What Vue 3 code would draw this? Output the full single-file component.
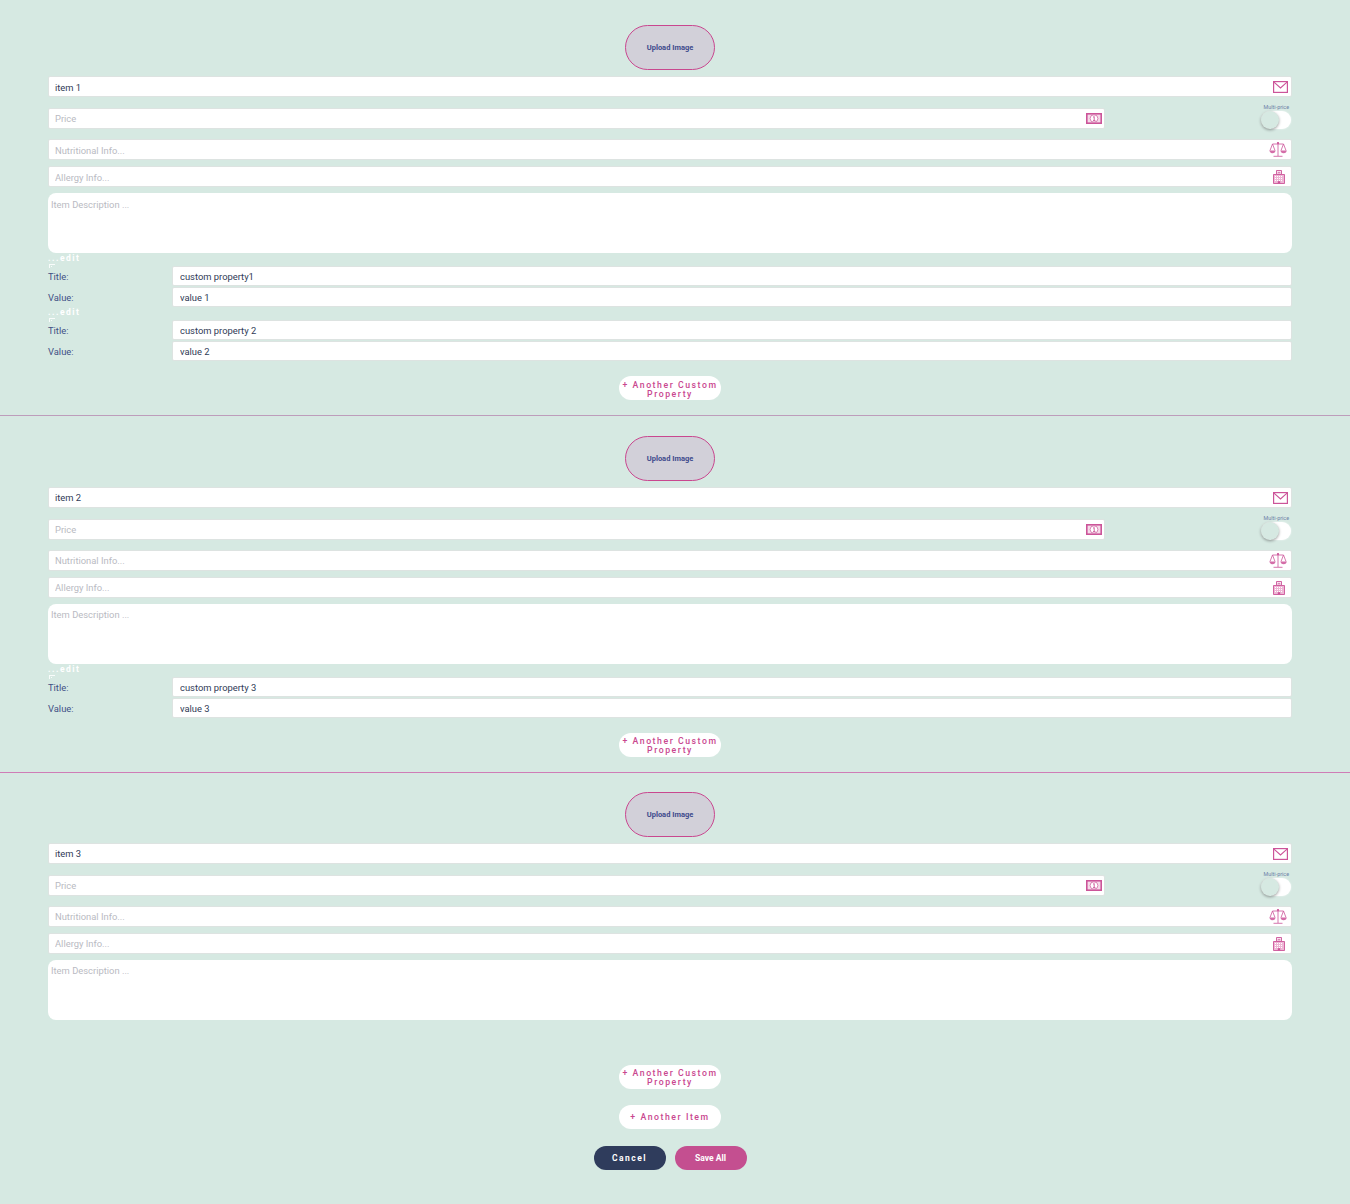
<script setup>
const items = [
  { name: 'item 1', props: [
    { title: 'custom property1', value: 'value 1' },
    { title: 'custom property 2', value: 'value 2' },
  ] },
  { name: 'item 2', props: [{ title: 'custom property 3', value: 'value 3' }] },
  { name: 'item 3', props: [] },
]
</script>

<template>
  <div class="page">
    <section v-for="item in items" :key="item.name" class="item">
      <button class="upload" type="button">Upload Image</button>

      <label class="field name">
        <input class="input" :value="item.name" />
        <svg class="icon mail" viewBox="0 0 15 12" width="15" height="12">
          <rect x=".6" y=".6" width="13.8" height="10.8" fill="none" stroke="currentColor" stroke-width="1.2" />
          <path d="M1 1.2 7.5 7 14 1.2" fill="none" stroke="currentColor" stroke-width="1.1" />
        </svg>
      </label>

      <div class="price-row">
        <label class="field price">
          <input class="input" placeholder="Price" />
          <svg class="icon cash" viewBox="0 0 16 11" width="16" height="11">
            <rect x=".8" y=".8" width="14.4" height="9.4" fill="#f5dbe9" stroke="currentColor" stroke-width="1.6" />
            <ellipse cx="8" cy="5.5" rx="3.9" ry="3.7" fill="#fff" stroke="currentColor" stroke-width=".7" />
            <path d="M7.1 4.3 8.2 3.4V7.6M7 7.6h2.4" fill="none" stroke="currentColor" stroke-width=".9" />
          </svg>
        </label>
        <div class="multi">
          <span class="multi-label">Multi-price</span>
          <span class="toggle"><span class="knob"></span></span>
        </div>
      </div>

      <label class="field nutrition">
        <input class="input" placeholder="Nutritional Info..." />
        <svg class="icon scale" viewBox="0 0 18 16" width="18" height="16">
          <g fill="none" stroke="currentColor" stroke-width=".8">
            <path d="M9 1.5V15M4.5 15.3h9M3.5 3h11M3.5 3 1 9.5M3.5 3 6 9.5M14.5 3 12 9.5M14.5 3 17 9.5" />
          </g>
          <path fill="currentColor" opacity=".85" d="M.4 9.6h6a3 2.6 0 0 1-6 0zM11.6 9.6h6a3 2.6 0 0 1-6 0z" />
          <circle cx="9" cy="2" r="1.1" fill="currentColor" />
        </svg>
      </label>

      <label class="field allergy">
        <input class="input" placeholder="Allergy Info..." />
        <svg class="icon hospital" viewBox="0 0 12 14" width="12" height="14">
          <path fill="#eeb6d5" stroke="currentColor" stroke-width=".9" d="M.5 4.5h11v9H.5z" />
          <path fill="#fff" stroke="currentColor" stroke-width=".9" d="M3.5 4.5v-4h5v4z" />
          <path fill="currentColor" d="M4.7 1.4h.7v1h1.2v-1h.7v2.8h-.7V3H5.4v1.2h-.7z" />
          <path stroke="#fff" stroke-dasharray="1 1" d="M2 6.5h8M2 8.5h8M2 10.5h8" />
          <path fill="currentColor" d="M4.8 11.2h2.4v2.3H4.8z" />
        </svg>
      </label>

      <textarea class="description" placeholder="Item Description ..."></textarea>

      <div class="props" :class="{ empty: !item.props.length }">
        <div v-for="prop in item.props" :key="prop.title" class="prop">
          <div class="edit">
            <span>...edit</span>
            <svg class="broken" viewBox="0 0 6 4" width="6" height="4">
              <path d="M0 0h6v1H1v3H0zM2 2h1v1H2z" fill="#fff" opacity=".85" />
            </svg>
          </div>
          <div class="prop-row">
            <span class="prop-label">Title:</span>
            <input class="input prop-input" :value="prop.title" />
          </div>
          <div class="prop-row">
            <span class="prop-label">Value:</span>
            <input class="input prop-input" :value="prop.value" />
          </div>
        </div>
      </div>

      <button class="add" type="button">+ Another Custom Property</button>
    </section>

    <div class="footer">
      <button class="add add-item" type="button">+ Another Item</button>
      <div class="actions">
        <button class="action cancel" type="button">Cancel</button>
        <button class="action save" type="button">Save All</button>
      </div>
    </div>
  </div>
</template>

<style>
html, body { margin: 0; background: #d6e9e2; }
</style>

<style scoped>
.page {
  height: 1204px;
  background: #d6e9e2;
  font-family: Roboto, "Liberation Sans", sans-serif;
  box-sizing: border-box;
}
.item {
  padding: 20px 58px 15px 48px;
  border-bottom: 1px solid #bd9dbb;
  display: flex;
  flex-direction: column;
}
.item:nth-child(1) { padding-top: 25px; }
.item:nth-child(2) { border-bottom-color: #cf7db6; }
.item:nth-child(3) { padding-top: 19px; padding-bottom: 0; border-bottom: 0; }
button { font-family: inherit; border: 0; padding: 0; }
.upload {
  align-self: center;
  width: 90px;
  height: 45px;
  border: 1px solid #c9478f;
  border-radius: 23px;
  background: #d2d0d9;
  color: #3e4a8c;
  font-size: 7.5px;
  font-weight: 700;
}
.field {
  position: relative;
  display: block;
  height: 21px;
}
.name { margin-top: 6px; }
.allergy { margin-top: 6px; }
.input {
  box-sizing: border-box;
  display: block;
  width: 100%;
  height: 100%;
  border: 1px solid #dde3e1;
  border-radius: 2px;
  background: #fff;
  padding: 0 6px;
  color: #2f3a56;
  font: 400 9.4px Roboto, sans-serif;
  outline: none;
}
.price .input { padding-top: 1px; }
.item:first-child .name .input,
.item:first-child .nutrition .input,
.item:first-child .allergy .input { padding-top: 2px; }
.input::placeholder, .description::placeholder { color: #b9bac2; opacity: 1; }
.icon { position: absolute; color: #cc5499; }
.mail { right: 4px; top: 5px; }
.cash { right: 3px; top: 5px; }
.scale { right: 5px; top: 2px; }
.hospital { right: 7px; top: 4px; }
.price-row {
  height: 30px;
  margin: 6px 0;
  display: flex;
  align-items: center;
  justify-content: space-between;
}
.price { width: 85%; }
.multi {
  display: flex;
  flex-direction: column;
  align-items: flex-end;
  height: 30px;
}
.multi-label {
  font-size: 5.4px;
  line-height: 8px;
  margin: 0 3px 0 0;
  color: #6f83a8;
}
.toggle {
  position: relative;
  display: block;
  width: 30px;
  height: 18px;
  margin: 0 1px 0 0;
  border-radius: 9px;
  background: #fff;
  box-shadow: 0 0 2px rgba(255, 255, 255, .8);
}
.knob {
  position: absolute;
  left: 0;
  top: 0;
  width: 18px;
  height: 18px;
  border-radius: 50%;
  background: #d6e9e2;
  box-shadow: 0 1px 3px rgba(0, 0, 0, .4);
}
.description {
  display: block;
  box-sizing: border-box;
  width: 100%;
  height: 60px;
  margin: 6px 0 1px;
  padding: 5px 3px;
  border: 0;
  border-radius: 8px;
  background: #fff;
  font: 400 9.4px Roboto, sans-serif;
  resize: none;
  outline: none;
}
.item:first-child .description { padding-top: 5.5px; }
.props.empty { height: 30px; }
.edit {
  position: relative;
  height: 12px;
  color: #fff;
  font-size: 8.5px;
  font-weight: 700;
  line-height: 9px;
  letter-spacing: 1.5px;
}
.broken { position: absolute; left: 1px; top: 10px; }
.prop-row {
  display: grid;
  grid-template-columns: 124px 1fr;
  align-items: start;
  height: 20px;
  margin-bottom: 1px;
}
.prop-label { font-size: 9.4px; line-height: 21px; color: #3f5085; }
.prop-input { padding: 0 6px 0 7px; height: 20px; }
.add {
  align-self: center;
  box-sizing: border-box;
  width: 102px;
  height: 24px;
  margin-top: 14px;
  padding-top: 2px;
  border-radius: 12px;
  background: #fff;
  color: #c9478f;
  font-size: 8.7px;
  font-weight: 500;
  line-height: 9px;
  letter-spacing: 1.55px;
  text-align: center;
}
.item:first-child .add { padding-top: 3px; }
.footer {
  display: flex;
  flex-direction: column;
  align-items: center;
  padding: 2px 10px 0 0;
}
.add-item { padding-top: 0; }
.actions { display: flex; gap: 9px; margin-top: 17px; }
.action {
  width: 72px;
  height: 24px;
  border-radius: 12px;
  color: #fff;
  font-size: 8.5px;
  font-weight: 700;
}
.cancel { background: #2f3c5c; letter-spacing: 1.5px; }
.save { background: #c44f90; }
</style>
